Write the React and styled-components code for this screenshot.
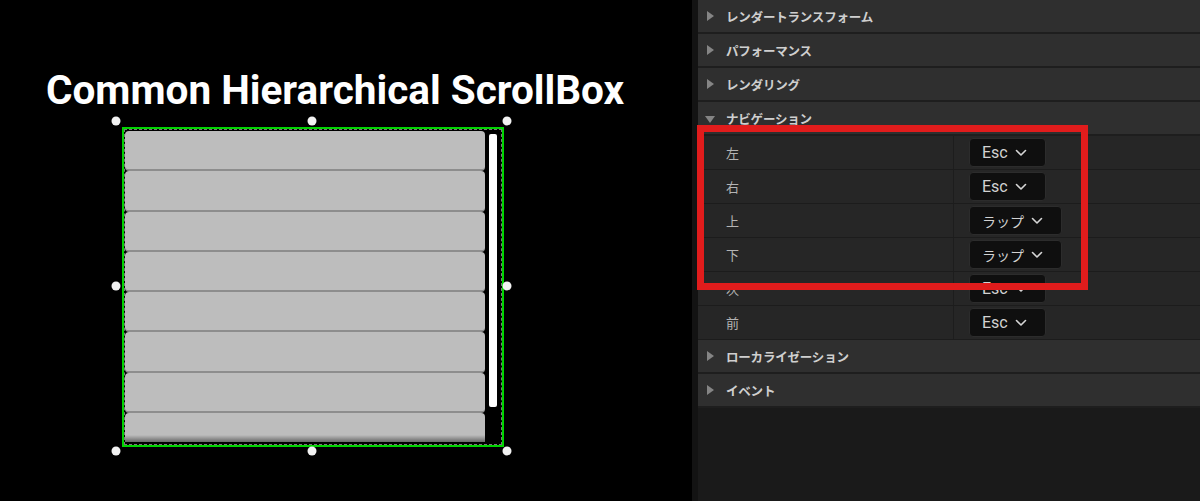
import React from "react";
import styled, { createGlobalStyle } from "styled-components";

const GlobalStyle = createGlobalStyle`
  html, body {
    margin: 0;
    padding: 0;
    background: #000000;
  }
  body {
    font-family: "Noto Sans CJK JP", "Noto Sans", sans-serif;
  }
`;

const sections = [
  { title: "レンダートランスフォーム" },
  { title: "パフォーマンス" },
  { title: "レンダリング" },
  {
    title: "ナビゲーション",
    open: true,
    props: [
      { label: "左", value: "Esc" },
      { label: "右", value: "Esc" },
      { label: "上", value: "ラップ", cjk: true },
      { label: "下", value: "ラップ", cjk: true },
      { label: "次", value: "Esc" },
      { label: "前", value: "Esc" },
    ],
  },
  { title: "ローカライゼーション" },
  { title: "イベント" },
];

// resize handles round the selected widget
const handles = [
  ["0%", "0%"],
  ["50%", "0%"],
  ["100%", "0%"],
  ["0%", "50%"],
  ["100%", "50%"],
  ["0%", "100%"],
  ["50%", "100%"],
  ["100%", "100%"],
];

const App = () => {
  return (
    <Page>
      <GlobalStyle />
      <Viewport>
        <Title>Common Hierarchical ScrollBox</Title>
        <Widget>
          <DashedFrame>
            <ItemList>
              {Array.from({ length: 8 }).map((_, i) => (
                <Item key={i} />
              ))}
              <BottomFade />
            </ItemList>
            <ScrollTrack>
              <ScrollThumb />
            </ScrollTrack>
          </DashedFrame>
          <HandleLayer>
            {handles.map(([x, y], i) => (
              <Handle key={i} style={{ left: x, top: y }} />
            ))}
          </HandleLayer>
        </Widget>
      </Viewport>
      <Splitter />
      <Details>
        {sections.map((s) => (
          <React.Fragment key={s.title}>
            <SectionHeader>
              <Arrow open={s.open} />
              <SectionTitle>{s.title}</SectionTitle>
            </SectionHeader>
            {s.props &&
              s.props.map((p) => (
                <PropRow key={p.label}>
                  <PropLabel>{p.label}</PropLabel>
                  <PropValue>
                    <Dropdown>
                      <DropdownText cjk={p.cjk}>{p.value}</DropdownText>
                      <Chevron viewBox="0 0 12 8">
                        <path
                          d="M1.5 1.5 L6 6 L10.5 1.5"
                          fill="none"
                          stroke="#d6d6d6"
                          strokeWidth="1.6"
                          strokeLinecap="round"
                          strokeLinejoin="round"
                        />
                      </Chevron>
                    </Dropdown>
                  </PropValue>
                </PropRow>
              ))}
          </React.Fragment>
        ))}
        <Highlight />
      </Details>
    </Page>
  );
};

const Page = styled.div`
  display: flex;
  width: 1200px;
  height: 501px;
  overflow: hidden;
  background: #000000;
`;

const Viewport = styled.div`
  width: 692px;
  flex-shrink: 0;
  background: #000000;
  display: flex;
  flex-direction: column;
  padding-top: 67px;
  box-sizing: border-box;
`;

const Title = styled.div`
  font-family: Roboto, "Liberation Sans", sans-serif;
  font-weight: 700;
  font-size: 40.5px;
  line-height: 46px;
  color: #ffffff;
  margin-left: 46px;
  white-space: nowrap;
`;

const Widget = styled.div`
  position: relative;
  margin-top: 14px;
  margin-left: 122px;
  width: 382px;
  height: 320px;
  border: 2px solid #00d400;
  box-sizing: border-box;
`;

const DashedFrame = styled.div`
  position: absolute;
  inset: 0;
  border: 1px dashed #7a7a7a;
  display: flex;
  padding: 1px 4px 2px 0;
  gap: 4px;
`;

const ItemList = styled.div`
  position: relative;
  flex: 1;
  overflow: hidden;
  display: flex;
  flex-direction: column;
`;

const Item = styled.div`
  flex-shrink: 0;
  height: 38.3px;
  background: #bdbdbd;
  border-radius: 4px;
  border-bottom: 2px solid #8d8d8d;
`;

const BottomFade = styled.div`
  position: absolute;
  left: 0;
  right: 0;
  bottom: 0;
  height: 7px;
  background: linear-gradient(
    to bottom,
    rgba(0, 0, 0, 0),
    rgba(0, 0, 0, 0.45)
  );
`;

const ScrollTrack = styled.div`
  width: 8px;
  padding-top: 3px;
`;

const ScrollThumb = styled.div`
  width: 8px;
  height: 273px;
  background: #ffffff;
  border-radius: 2px;
`;

const HandleLayer = styled.div`
  position: absolute;
  left: -8px;
  top: -8px;
  right: -5px;
  bottom: -6px;
  pointer-events: none;
`;

const Handle = styled.div`
  position: absolute;
  width: 9px;
  height: 9px;
  transform: translate(-50%, -50%);
  border-radius: 50%;
  background: #f2f2f2;
`;

const Splitter = styled.div`
  width: 6px;
  flex-shrink: 0;
  background: #131313;
`;

const Details = styled.div`
  position: relative;
  flex: 1;
  background: #1a1a1a;
  display: flex;
  flex-direction: column;
`;

const SectionHeader = styled.div`
  height: 32px;
  flex-shrink: 0;
  display: flex;
  align-items: center;
  background: #2f2f2f;
  border-bottom: 2px solid #1e1e1e;
  padding-left: 9px;
`;

const Arrow = styled.span`
  width: 0;
  height: 0;
  ${(p) =>
    p.open
      ? `
    border-left: 5.5px solid transparent;
    border-right: 5.5px solid transparent;
    border-top: 7px solid #858585;
    margin-left: -2px;
    margin-right: 11px;
    margin-top: 2px;
  `
      : `
    border-top: 5.5px solid transparent;
    border-bottom: 5.5px solid transparent;
    border-left: 7px solid #858585;
    margin-right: 12px;
  `}
`;

const SectionTitle = styled.span`
  font-size: 12.5px;
  font-weight: 700;
  color: #cfcfcf;
  letter-spacing: -0.2px;
`;

const PropRow = styled.div`
  height: 33px;
  flex-shrink: 0;
  display: flex;
  background: #262626;
  border-bottom: 1px solid #1c1c1c;
`;

const PropLabel = styled.div`
  width: 256px;
  box-sizing: border-box;
  padding-left: 28px;
  display: flex;
  align-items: center;
  font-size: 13px;
  color: #b4b4b4;
  border-right: 1px solid #1d1d1d;
`;

const PropValue = styled.div`
  flex: 1;
  display: flex;
  align-items: center;
  padding-left: 15px;
`;

const Dropdown = styled.div`
  display: flex;
  align-items: center;
  gap: 7px;
  height: 27px;
  padding: 0 18px 0 12px;
  background: #0f0f0f;
  border: 1px solid #2c2c2c;
  border-radius: 4px;
`;

const DropdownText = styled.span`
  font-family: Roboto, "Noto Sans CJK JP", sans-serif;
  font-size: ${(p) => (p.cjk ? "14px" : "16px")};
  color: #d2d2d2;
`;

const Chevron = styled.svg`
  width: 12px;
  height: 8px;
  margin-top: 1px;
`;

const Highlight = styled.div`
  position: absolute;
  left: -1px;
  top: 125px;
  width: 391px;
  height: 165px;
  box-sizing: border-box;
  border: 7.5px solid #e11c1c;
  pointer-events: none;
`;

export default App;
